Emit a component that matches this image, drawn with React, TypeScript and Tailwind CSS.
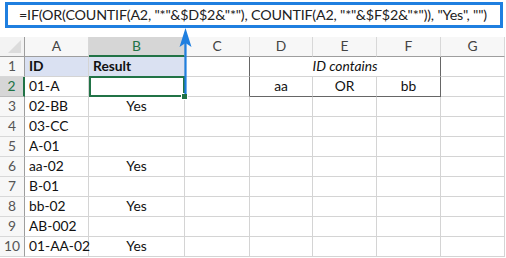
import React from "react";

const cols = ["A", "B", "C", "D", "E", "F", "G"];
const rows: { a: string; b?: string }[] = [
  { a: "ID", b: "Result" },
  { a: "01-A" },
  { a: "02-BB", b: "Yes" },
  { a: "03-CC" },
  { a: "A-01" },
  { a: "aa-02", b: "Yes" },
  { a: "B-01" },
  { a: "bb-02", b: "Yes" },
  { a: "AB-002" },
  { a: "01-AA-02", b: "Yes" },
];

export default function App() {
  const font = { fontFamily: "Lato, 'Open Sans', sans-serif" };
  return (
    <div className="relative w-[506px] h-[258px] bg-white overflow-hidden" style={font}>
      <div className="pt-[2px] pl-[5px]">
        <div className="w-[498px] h-[26px] border-[3px] border-[#1f7fe0] flex items-center pl-[11px] text-[14.3px] tracking-[-0.2px] text-[#222] whitespace-nowrap">
          =IF(OR(COUNTIF(A2, "*"&amp;$D$2&amp;"*"), COUNTIF(A2, "*"&amp;$F$2&amp;"*")), "Yes", "")
        </div>
      </div>
      <div className="mt-[9px] grid grid-cols-[25px_64px_96px_65px_63px_64px_64px_64px] grid-rows-[20px_repeat(10,20px)] text-[13.8px] text-[#111] whitespace-nowrap">
        {/* header row */}
        <div className="relative bg-[#f3f3f3] border-r border-b border-[#9e9e9e]">
          <div className="absolute right-[3px] bottom-[3px] w-0 h-0 border-l-[13px] border-l-transparent border-b-[13px] border-b-[#dcdcdc]" />
        </div>
        {cols.map((c) => (
          <div
            key={c}
            className={
              c === "B"
                ? "flex items-center justify-center bg-[#d6d6d6] border-r border-[#bcbcbc] border-b-2 border-b-[#217346] text-[#217346]"
                : "flex items-center justify-center bg-[#f7f7f7] border-r border-[#d8d8d8] border-b border-b-[#9e9e9e] text-[#444]"
            }
          >
            {c}
          </div>
        ))}
        {rows.map((r, i) => {
          const n = i + 1;
          const sel = n === 2;
          return (
            <React.Fragment key={n}>
              <div
                className={
                  sel
                    ? "flex items-center justify-center bg-[#d6d6d6] border-b border-[#bcbcbc] border-r-2 border-r-[#217346] text-[#217346]"
                    : "flex items-center justify-center bg-[#f7f7f7] border-b border-[#d8d8d8] border-r border-r-[#9e9e9e] text-[#555]"
                }
              >
                {n}
              </div>
              <div
                className={
                  "flex items-center pl-[4px] border-r border-b border-[#d4d4d4] " +
                  (n === 1 ? "bg-[#dae1f2] font-bold" : "")
                }
              >
                {r.a}
              </div>
              {sel ? (
                <div className="relative border-2 border-[#217346] -mt-px h-[21px]">
                  <div className="absolute -right-[5px] -bottom-[5px] w-[7px] h-[7px] bg-[#217346] border border-white" />
                </div>
              ) : (
                <div
                  className={
                    "flex items-center border-r border-b border-[#d4d4d4] " +
                    (n === 1 ? "bg-[#dae1f2] font-bold pl-[4px]" : "justify-center")
                  }
                >
                  {r.b}
                </div>
              )}
              <div
                className={
                  "border-b border-[#d4d4d4] border-r " +
                  (n <= 2 ? "border-r-[#666]" : "border-r-[#d4d4d4]")
                }
              />
              {n === 1 ? (
                <div className="col-span-3 flex items-center justify-center italic border-b border-[#d4d4d4] border-r border-r-[#666]">
                  ID contains
                </div>
              ) : n === 2 ? (
                <>
                  <div className="flex items-center justify-center border-r border-[#d4d4d4] border-b border-b-[#666]">aa</div>
                  <div className="flex items-center justify-center border-r border-[#d4d4d4] border-b border-b-[#666]">OR</div>
                  <div className="flex items-center justify-center border-r border-r-[#666] border-b border-b-[#666]">bb</div>
                </>
              ) : (
                <>
                  <div className="border-r border-b border-[#d4d4d4]" />
                  <div className="border-r border-b border-[#d4d4d4]" />
                  <div className="border-r border-b border-[#d4d4d4]" />
                </>
              )}
              <div className="border-r border-b border-[#d4d4d4]" />
            </React.Fragment>
          );
        })}
      </div>
      <svg className="absolute left-[178px] top-[28px]" width="16" height="66" viewBox="0 0 16 66">
        <line x1="7.5" y1="10" x2="7.5" y2="66" stroke="#1f7fe0" strokeWidth="2.2" />
        <path d="M7.5 0 L13.5 19 L7.5 15 L1.5 19 Z" fill="#1f7fe0" />
      </svg>
    </div>
  );
}
